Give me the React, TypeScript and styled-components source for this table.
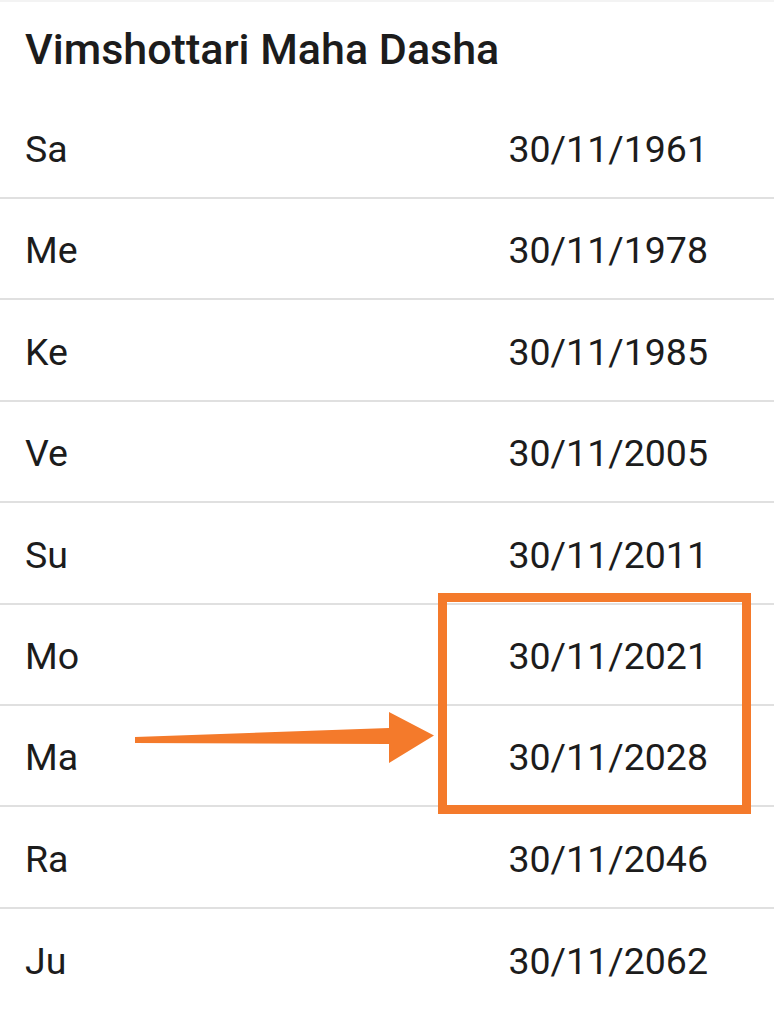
import React from 'react';
import styled, { createGlobalStyle } from 'styled-components';

interface DashaPeriod {
  planet: string;
  start: string;
}

const periods: DashaPeriod[] = [
  { planet: 'Sa', start: '30/11/1961' },
  { planet: 'Me', start: '30/11/1978' },
  { planet: 'Ke', start: '30/11/1985' },
  { planet: 'Ve', start: '30/11/2005' },
  { planet: 'Su', start: '30/11/2011' },
  { planet: 'Mo', start: '30/11/2021' },
  { planet: 'Ma', start: '30/11/2028' },
  { planet: 'Ra', start: '30/11/2046' },
  { planet: 'Ju', start: '30/11/2062' },
];

const ORANGE = '#f47a2b';

const GlobalStyle = createGlobalStyle`
  html, body {
    margin: 0;
    padding: 0;
    background: #ffffff;
  }

  body {
    font-family: Roboto, "Noto Sans", "Liberation Sans", sans-serif;
    color: #1c1c1c;
  }
`;

const Screen = styled.div`
  position: relative;
  width: 774px;
  height: 1024px;
  overflow: hidden;
  background: #ffffff;
`;

const Header = styled.header`
  height: 97.6px;
  box-sizing: border-box;
  padding: 23px 25px 0;
  border-top: 2px solid #f3f3f3;
`;

const Title = styled.h1`
  margin: 0;
  font-size: 43px;
  line-height: 48px;
  font-weight: 500;
  color: #1c1c1c;
`;

const List = styled.ul`
  list-style: none;
  margin: 0;
  padding: 0;
`;

const Row = styled.li<{ last?: boolean }>`
  display: flex;
  align-items: center;
  justify-content: space-between;
  height: 101.4px;
  box-sizing: border-box;
  padding: 5px 66px 0 25px;
  border-bottom: ${props => (props.last ? 'none' : '2px solid #e0e0e0')};
  font-size: 37.5px;
  line-height: 1;
`;

const Planet = styled.span`
  font-weight: 400;
`;

const StartDate = styled.span`
  font-weight: 400;
`;

const Highlight = styled.div`
  position: absolute;
  left: 438px;
  top: 593px;
  width: 313px;
  height: 221px;
  box-sizing: border-box;
  border: 9.5px solid ${ORANGE};
  pointer-events: none;
`;

const ArrowSvg = styled.svg`
  position: absolute;
  left: 0;
  top: 0;
  pointer-events: none;
`;

const Arrow: React.FC = () => (
  <ArrowSvg width="774" height="1024" viewBox="0 0 774 1024">
    <polygon
      points="135,737 389,728 389,712 434,735.5 389,763 389,744 135,743"
      fill={ORANGE}
    />
  </ArrowSvg>
);

const App: React.FC = () => (
  <Screen>
    <GlobalStyle />
    <Header>
      <Title>Vimshottari Maha Dasha</Title>
    </Header>
    <List>
      {periods.map((p, i) => (
        <Row key={p.planet} last={i === periods.length - 1}>
          <Planet>{p.planet}</Planet>
          <StartDate>{p.start}</StartDate>
        </Row>
      ))}
    </List>
    <Highlight />
    <Arrow />
  </Screen>
);

export default App;
